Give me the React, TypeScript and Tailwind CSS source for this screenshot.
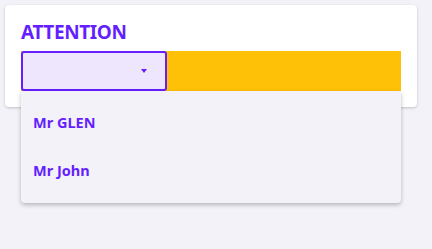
import React from "react";

export default function App() {
  return (
    <div className="w-[432px] h-[249px] bg-[#f3f2f8] pt-[5px] pl-[5px] relative" style={{ fontFamily: '"Noto Sans", "Open Sans", sans-serif' }}>
      <div className="w-[412px] h-[102px] bg-white rounded-[4px] shadow-[0_1px_3px_rgba(0,0,0,0.2)] pt-[14px] pl-[16px]">
        <div className="text-[19px] leading-[26px] font-bold text-[#651fff] tracking-[-0.4px]">ATTENTION</div>
        <div className="mt-[6px] w-[380px] h-[40px] bg-[#ffc107] relative">
          <div className="w-[146px] h-[40px] border-2 border-[#651fff] rounded-[3px] bg-[#eee6fd] flex items-center justify-end pr-[18px]">
            <div className="w-0 h-0 border-l-[3.5px] border-r-[3.5px] border-t-[4px] border-l-transparent border-r-transparent border-t-[#651fff]" />
          </div>
          <div className="absolute left-0 top-[40px] w-[380px] bg-[#f3f2f8] rounded-b-[4px] shadow-[0_2px_4px_rgba(0,0,0,0.25)] py-[8px] z-10">
            <div className="h-[48px] flex items-center pl-[12px] text-[14.5px] font-bold text-[#651fff]">Mr GLEN</div>
            <div className="h-[48px] flex items-center pl-[12px] text-[14.5px] font-bold text-[#651fff]">Mr John</div>
          </div>
        </div>
      </div>
    </div>
  );
}
